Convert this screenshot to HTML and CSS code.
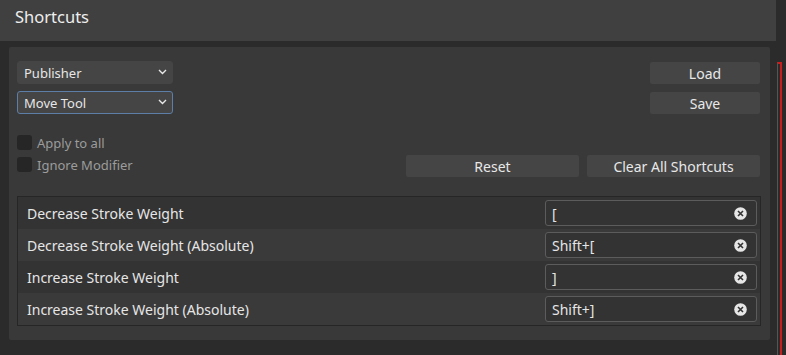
FILE: index.html
```html
<!DOCTYPE html>
<html>
<head>
<meta charset="utf-8">
<link rel="stylesheet" href="styles.css">
</head>
<body>
<div class="window">
  <div class="main">
    <div class="header"><span class="title">Shortcuts</span></div>
    <div class="body">
      <div class="panel">
        <div class="top">
          <div class="selects">
            <div class="select"><span>Publisher</span><svg class="chev" width="9" height="6" viewBox="0 0 9 6"><path d="M1 1 L4.5 4.5 L8 1" fill="none" stroke="#e8e8e8" stroke-width="1.4"/></svg></div>
            <div class="select focus"><span>Move Tool</span><svg class="chev" width="9" height="6" viewBox="0 0 9 6"><path d="M1 1 L4.5 4.5 L8 1" fill="none" stroke="#e8e8e8" stroke-width="1.4"/></svg></div>
          </div>
          <div class="side-btns">
            <div class="btn">Load</div>
            <div class="btn">Save</div>
          </div>
        </div>
        <div class="options">
          <div class="checks">
            <label class="check"><span class="box"></span><span>Apply to all</span></label>
            <label class="check"><span class="box"></span><span>Ignore Modifier</span></label>
          </div>
          <div class="wide-btns">
            <div class="btn wide">Reset</div>
            <div class="btn wide">Clear All Shortcuts</div>
          </div>
        </div>
        <div class="table">
          <div class="row odd"><span class="name">Decrease Stroke Weight</span><div class="field"><span>[</span><svg class="clr" width="13" height="13" viewBox="0 0 13 13"><circle cx="6.5" cy="6.5" r="6.3" fill="#e6e6e6"/><path d="M4 4 L9 9 M9 4 L4 9" stroke="#333" stroke-width="1.6"/></svg></div></div>
          <div class="row"><span class="name">Decrease Stroke Weight (Absolute)</span><div class="field"><span>Shift+[</span><svg class="clr" width="13" height="13" viewBox="0 0 13 13"><circle cx="6.5" cy="6.5" r="6.3" fill="#e6e6e6"/><path d="M4 4 L9 9 M9 4 L4 9" stroke="#333" stroke-width="1.6"/></svg></div></div>
          <div class="row odd"><span class="name">Increase Stroke Weight</span><div class="field"><span>]</span><svg class="clr" width="13" height="13" viewBox="0 0 13 13"><circle cx="6.5" cy="6.5" r="6.3" fill="#e6e6e6"/><path d="M4 4 L9 9 M9 4 L4 9" stroke="#333" stroke-width="1.6"/></svg></div></div>
          <div class="row"><span class="name">Increase Stroke Weight (Absolute)</span><div class="field"><span>Shift+]</span><svg class="clr" width="13" height="13" viewBox="0 0 13 13"><circle cx="6.5" cy="6.5" r="6.3" fill="#e6e6e6"/><path d="M4 4 L9 9 M9 4 L4 9" stroke="#333" stroke-width="1.6"/></svg></div></div>
        </div>
      </div>
    </div>
  </div>
  <div class="strip"><div class="redline"></div></div>
</div>
</body>
</html>
```

FILE: styles.css
```css
html, body {
  margin: 0;
  padding: 0;
  background: #2b2b2b;
  font-family: "Noto Sans", "Open Sans", sans-serif;
  color: #e6e6e6;
}
.window {
  display: flex;
  width: 786px;
  height: 355px;
  overflow: hidden;
}
.main {
  width: 776px;
  display: flex;
  flex-direction: column;
}
.header {
  height: 41px;
  background: #404040;
  box-sizing: border-box;
  padding: 5px 0 0 15px;
}
.title {
  font-size: 16.5px;
  color: #eeeeee;
}
.body {
  padding: 6px 0 0 9px;
}
.panel {
  width: 761px;
  height: 293px;
  box-sizing: border-box;
  background: #393939;
  border-radius: 2px;
  padding: 14px 10px 0 8px;
}
.top {
  display: flex;
  justify-content: space-between;
}
.selects {
  display: flex;
  flex-direction: column;
  gap: 7px;
  width: 156px;
}
.select {
  height: 23px;
  box-sizing: border-box;
  background: #454545;
  border: 1px solid #454545;
  border-radius: 3px;
  display: flex;
  align-items: center;
  justify-content: space-between;
  padding: 0 5px 0 6px;
  font-size: 13px;
}
.select.focus {
  border-color: #5d7ea6;
}
.chev {
  display: block;
  margin-top: -2px;
}
.side-btns {
  display: flex;
  flex-direction: column;
  gap: 8px;
  width: 110px;
  padding-top: 1px;
}
.btn {
  height: 22px;
  background: #454545;
  border-radius: 2px;
  display: flex;
  align-items: center;
  justify-content: center;
  font-size: 14px;
  color: #e8e8e8;
}
.options {
  display: flex;
  justify-content: space-between;
  height: 42px;
  margin-top: 21px;
}
.checks {
  display: flex;
  flex-direction: column;
  gap: 7px;
}
.check {
  display: flex;
  align-items: center;
  gap: 5px;
  height: 15px;
  font-size: 13px;
  color: #9c9c9c;
}
.box {
  width: 15px;
  height: 15px;
  background: #262626;
  border-radius: 3px;
}
.wide-btns {
  display: flex;
  gap: 8px;
  align-self: flex-end;
}
.btn.wide {
  width: 173px;
}
.table {
  margin-top: 19px;
  width: 744px;
  box-sizing: border-box;
  border: 1px solid #262626;
}
.row {
  height: 32px;
  display: flex;
  align-items: center;
  justify-content: space-between;
  padding: 0 3px 0 9px;
  background: #3a3a3a;
  font-size: 14px;
}
.row.odd {
  background: #333333;
}
.field {
  width: 212px;
  height: 26px;
  box-sizing: border-box;
  border: 1px solid #5c5c5c;
  border-radius: 3px;
  background: #333333;
  display: flex;
  align-items: center;
  justify-content: space-between;
  padding: 0 9px 0 6px;
  font-size: 14px;
}
.clr {
  display: block;
}
.strip {
  width: 10px;
}
.redline {
  margin: 62px 0 0 1px;
  width: 2px;
  height: 300px;
  border-top: 2px solid #c81e1e;
  border-right: 2px solid #c81e1e;
  border-left: 1px solid #555;
}
```
